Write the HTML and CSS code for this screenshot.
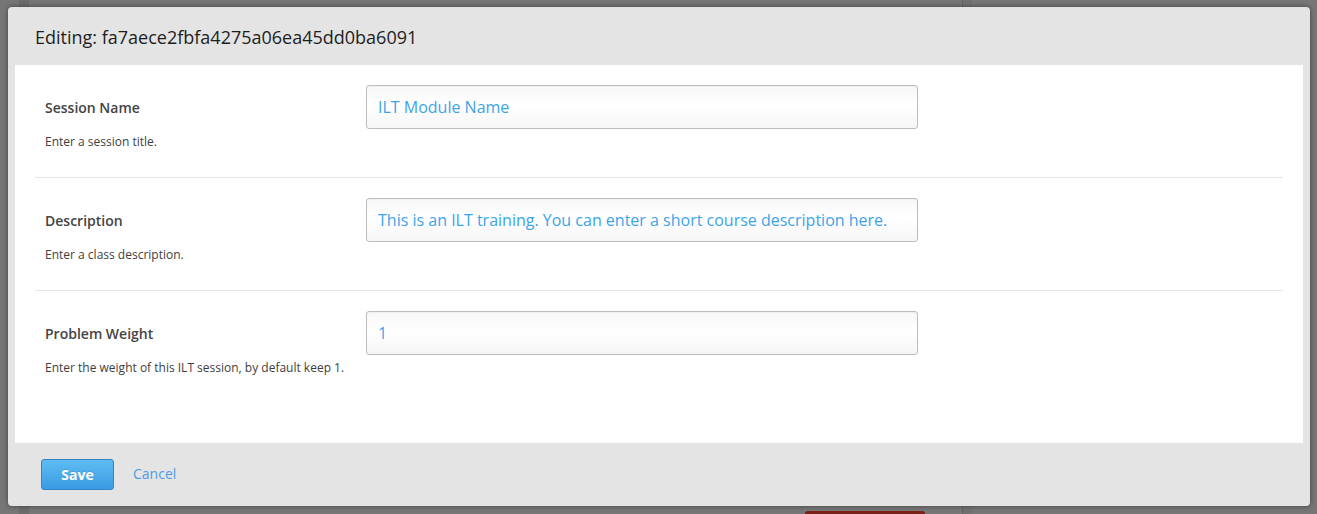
FILE: index.html
```html
<!DOCTYPE html>
<html lang="en">
<head>
<meta charset="utf-8">
<title>Editing</title>
<link rel="stylesheet" href="styles.css">
</head>
<body>
<div class="backdrop">
  <div class="strip strip-left"></div>
  <div class="strip strip-right"></div>
  <div class="red-btn"></div>
  <div class="modal">
    <div class="modal-header">
      <h2 class="modal-title">Editing: fa7aece2fbfa4275a06ea45dd0ba6091</h2>
    </div>
    <div class="modal-body">
      <div class="field-list">
        <div class="field-row">
          <div class="field-info">
            <label class="field-label">Session Name</label>
            <p class="field-help">Enter a session title.</p>
          </div>
          <div class="field-control">
            <input class="text-input" type="text" value="ILT Module Name">
          </div>
        </div>
        <div class="field-row">
          <div class="field-info">
            <label class="field-label">Description</label>
            <p class="field-help">Enter a class description.</p>
          </div>
          <div class="field-control">
            <input class="text-input" type="text" value="This is an ILT training. You can enter a short course description here.">
          </div>
        </div>
        <div class="field-row last">
          <div class="field-info">
            <label class="field-label">Problem Weight</label>
            <p class="field-help">Enter the weight of this ILT session, by default keep 1.</p>
          </div>
          <div class="field-control">
            <input class="text-input" type="text" value="1">
          </div>
        </div>
      </div>
    </div>
    <div class="modal-footer">
      <button class="btn-save" type="button">Save</button>
      <a class="cancel-link" href="#">Cancel</a>
    </div>
  </div>
</div>
</body>
</html>
```

FILE: styles.css
```css
* { box-sizing: border-box; }

html, body {
  margin: 0;
  padding: 0;
  height: 100%;
}

body {
  background: #767676;
  font-family: "Open Sans", "Liberation Sans", sans-serif;
  overflow: hidden;
}

.backdrop {
  position: relative;
  width: 1317px;
  height: 514px;
  padding: 7px 7px 0 8px;
}

.strip {
  position: absolute;
  top: 0;
  bottom: 0;
  width: 10px;
  background: #6c6c6c;
}
.strip-left { left: 19px; }
.strip-right { left: 962px; border-left: 1px solid #636363; background: #707070; }

.red-btn {
  position: absolute;
  left: 805px;
  top: 511px;
  width: 120px;
  height: 10px;
  border-radius: 3px;
  background: #7b2119;
}

.modal {
  position: relative;
  width: 1302px;
  height: 499px;
  background: #e4e4e4;
  border-radius: 4px;
  box-shadow: 0 0 5px rgba(0, 0, 0, 0.45);
  display: flex;
  flex-direction: column;
}

.modal-header {
  height: 58px;
  display: flex;
  align-items: center;
  padding: 2px 0 0 27px;
}

.modal-title {
  margin: 0;
  font-size: 18px;
  font-weight: 400;
  color: #1e1e1e;
}

.modal-body {
  background: #fff;
  margin: 0 7px;
  height: 378px;
  padding: 0 20px;
}

.field-row {
  display: grid;
  grid-template-columns: 331px 552px;
  padding: 20px 0 26px;
  border-bottom: 1px solid #e6e6e6;
}
.field-row.last { border-bottom: none; }

.field-info {
  padding-left: 10px;
}

.field-label {
  display: block;
  height: 44px;
  line-height: 45px;
  font-size: 14px;
  font-weight: 600;
  color: #444;
}

.field-help {
  margin: 4px 0 0;
  font-size: 12px;
  line-height: 18px;
  color: #3e3e3e;
}

.text-input {
  display: block;
  width: 552px;
  height: 44px;
  border: 1px solid #bdbdbd;
  border-radius: 3px;
  padding: 0 11px;
  font-family: "Open Sans", "Liberation Sans", sans-serif;
  font-size: 16px;
  color: #3da3ea;
  background: linear-gradient(to bottom, #f7f7f7 0%, #ffffff 45%, #f6f6f6 100%);
  box-shadow: inset 0 1px 1px rgba(0, 0, 0, 0.03);
  outline: none;
}

.modal-footer {
  flex: 1;
  display: flex;
  align-items: flex-start;
  padding: 16px 0 0 33px;
  gap: 19px;
}

.btn-save {
  width: 73px;
  height: 31px;
  border: 1px solid #2f86c6;
  border-radius: 3px;
  background: linear-gradient(to bottom, #5fbcf2 0%, #3a9be4 100%);
  color: #fff;
  font-family: "Open Sans", "Liberation Sans", sans-serif;
  font-size: 14px;
  font-weight: 700;
  padding: 0 0 1px;
  text-shadow: 0 -1px 0 rgba(0, 0, 0, 0.1);
}

.cancel-link {
  line-height: 30px;
  font-size: 14px;
  color: #4d9ce6;
  text-decoration: none;
}
```
